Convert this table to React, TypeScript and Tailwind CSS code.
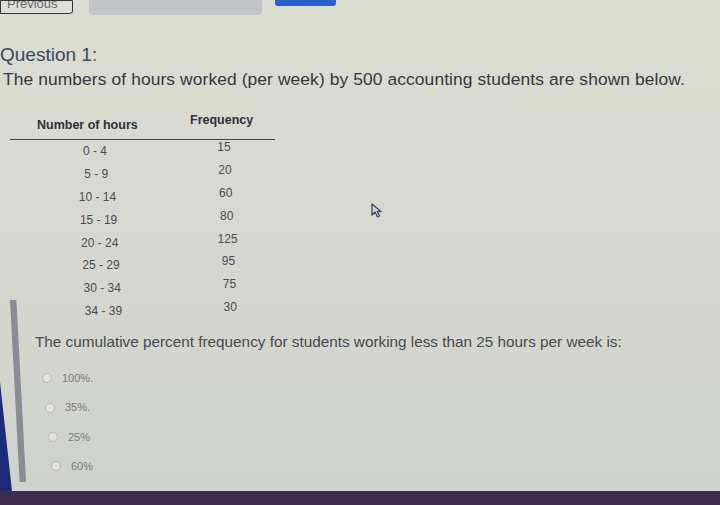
import React from "react";

const rows: [string, string][] = [
  ["0 - 4", "15"],
  ["5 - 9", "20"],
  ["10 - 14", "60"],
  ["15 - 19", "80"],
  ["20 - 24", "125"],
  ["25 - 29", "95"],
  ["30 - 34", "75"],
  ["34 - 39", "30"],
];

const options = ["100%.", "35%.", "25%", "60%"];

export default function App() {
  return (
    <div
      className="relative w-[720px] h-[505px] overflow-hidden bg-gradient-to-b from-[#dcddd3] via-[#d6d8cf] to-[#cfd2cd] text-[#3d3f46]"
      style={{ fontFamily: '"Liberation Sans", Arial, sans-serif' }}
    >
      {/* top nav buttons */}
      <div className="flex items-start h-[16px]">
        <div className="w-[73px] h-[14px] border border-[#333] rounded-br-[3px] bg-[#dedfd8] text-[13px] leading-[6px] text-[#666] pl-[6px] overflow-hidden">
          Previous
        </div>
        <div className="ml-[16px] w-[173px] h-[15px] rounded-b-[4px] bg-[#c2c4ca]" />
        <div className="ml-[13px] w-[61px] h-[6px] rounded-b-[3px] bg-[#2a5fd0]" />
      </div>

      <div className="pt-[28px] text-[19px] leading-[22px] text-[#3a4b5e]">Question 1:</div>

      <div className="pl-[3px] mt-[3px] text-[17.4px] leading-[20px] text-[#35373f] tracking-[0.1px]">
        The numbers of hours worked (per week) by 500 accounting students are shown below.
      </div>

      {/* table */}
      <div className="ml-[10px] mt-[29px] w-[265px] text-[12px] text-[#4a4c52]">
        <div className="flex items-end h-[22px] border-b-[1.5px] border-[#444] pb-[4px]">
          <div className="w-[165px] pl-[27px] font-bold text-[12.5px] text-[#2f3138]">Number of hours</div>
          <div className="w-[100px] pl-[15px] font-bold text-[12.5px] text-[#2f3138] mb-[5px]">Frequency</div>
        </div>
        <div className="flex flex-col">
          {rows.map(([h, f], i) => (
            <div key={h} className="flex h-[22.8px] items-center">
              <div className="w-[170px] text-center" style={{ paddingLeft: i * 2.4 + "px" }}>
                {h}
              </div>
              <div className="w-[60px] text-center -mt-[8px]" style={{ paddingLeft: 28 + i * 1.8 + "px" }}>
                {f}
              </div>
            </div>
          ))}
        </div>
      </div>

      {/* question */}
      <div className="pl-[35px] mt-[11px] text-[15.3px] leading-[18px] text-[#47494f]">
        The cumulative percent frequency for students working less than 25 hours per week is:
      </div>

      <div className="flex flex-col pl-[42px] mt-[20px] gap-[15.3px]">
        {options.map((o, i) => (
          <div key={o} className="flex items-center h-[14px]" style={{ paddingLeft: i * 3 + "px" }}>
            <span className="w-[10px] h-[10px] rounded-full border border-[#b8bab4] bg-[#e2e3dc]" />
            <span className="ml-[10px] text-[11px] text-[#77797d]">{o}</span>
          </div>
        ))}
      </div>

      {/* mouse cursor */}
      <svg className="absolute left-[371px] top-[203px]" width="14" height="16" viewBox="0 0 14 16">
        <path d="M1 1 L1 12 L4 9 L6.5 14 L8.5 13 L6.2 8.5 L10 8.5 Z" fill="none" stroke="#3c4a66" strokeWidth="1.3" strokeLinejoin="round" />
      </svg>

      {/* monitor bezel / scrollbar edge */}
      <div
        className="absolute left-0 top-[300px] w-[30px] h-[205px] bg-[#1d2a7a]"
        style={{ clipPath: "polygon(0 40%, 45% 100%, 0 100%)" }}
      />
      <div
        className="absolute left-[10px] top-[300px] w-[16px] h-[182px] bg-[#8a8c96]"
        style={{ clipPath: "polygon(0 0, 40% 0, 100% 100%, 60% 100%)" }}
      />

      {/* bottom taskbar edge */}
      <div className="absolute left-0 bottom-0 w-[720px] h-[14px] bg-[#3b2b4e]" />
    </div>
  );
}
